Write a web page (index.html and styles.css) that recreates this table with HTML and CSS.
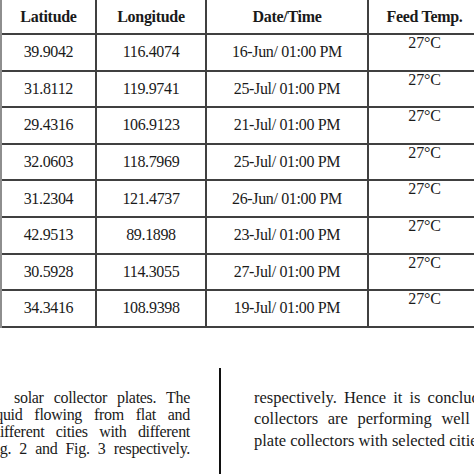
FILE: index.html
```html
<!DOCTYPE html>
<html>
<head>
<meta charset="utf-8">
<link rel="stylesheet" href="styles.css">
</head>
<body>
<div class="table">
  <div class="cell head">Latitude</div>
  <div class="cell head">Longitude</div>
  <div class="cell head">Date/Time</div>
  <div class="cell head">Feed Temp.</div>

  <div class="cell">39.9042</div><div class="cell">116.4074</div><div class="cell">16-Jun/ 01:00 PM</div><div class="cell temp">27°C</div>
  <div class="cell">31.8112</div><div class="cell">119.9741</div><div class="cell">25-Jul/ 01:00 PM</div><div class="cell temp">27°C</div>
  <div class="cell">29.4316</div><div class="cell">106.9123</div><div class="cell">21-Jul/ 01:00 PM</div><div class="cell temp">27°C</div>
  <div class="cell">32.0603</div><div class="cell">118.7969</div><div class="cell">25-Jul/ 01:00 PM</div><div class="cell temp">27°C</div>
  <div class="cell">31.2304</div><div class="cell">121.4737</div><div class="cell">26-Jun/ 01:00 PM</div><div class="cell temp">27°C</div>
  <div class="cell">42.9513</div><div class="cell">89.1898</div><div class="cell">23-Jul/ 01:00 PM</div><div class="cell temp">27°C</div>
  <div class="cell">30.5928</div><div class="cell">114.3055</div><div class="cell">27-Jul/ 01:00 PM</div><div class="cell temp">27°C</div>
  <div class="cell">34.3416</div><div class="cell">108.9398</div><div class="cell">19-Jul/ 01:00 PM</div><div class="cell temp">27°C</div>
</div>

<div class="text-section">
  <div class="col-left">
    <div class="jline l1">solar collector plates. The</div>
    <div class="jline l2">quid flowing from flat and</div>
    <div class="jline l3">different cities with different</div>
    <div class="jline l4">Fig. 2 and Fig. 3 respectively.</div>
  </div>
  <div class="rule"></div>
  <div class="col-right">
    <div class="rline r1">respectively. Hence it is concluded that</div>
    <div class="rline r2">collectors are performing well with</div>
    <div class="rline r3">plate collectors with selected cities</div>
  </div>
</div>
</body>
</html>
```

FILE: styles.css
```css
html, body {
  margin: 0;
  padding: 0;
  background: #ffffff;
  overflow: hidden;
  width: 474px;
  height: 474px;
}

body {
  font-family: "Liberation Serif", "Times New Roman", serif;
  color: #1a1a1a;
}

.table {
  display: grid;
  width: 478px;
  grid-template-columns: 93px 108px 160px 111px;
  grid-template-rows: 33px repeat(8, 34.6px);
  column-gap: 2px;
  row-gap: 2px;
  background: #404040;
  border-left: 2px solid #8e8e8e;
  padding-bottom: 2px;
}

.cell {
  background: #ffffff;
  display: flex;
  align-items: center;
  justify-content: center;
  font-size: 16px;
  letter-spacing: -0.35px;
  white-space: nowrap;
}

.head {
  font-weight: bold;
  letter-spacing: -0.3px;
  padding-top: 1px;
}

.temp {
  align-items: flex-start;
  line-height: 15px;
  letter-spacing: -0.2px;
}

.text-section {
  display: flex;
  align-items: flex-start;
  margin-top: 40px;
  height: 106px;
}

.col-left {
  width: 190px;
  flex: none;
  padding-top: 21.5px;
  font-size: 16px;
  letter-spacing: -0.3px;
  line-height: 17px;
}

.jline {
  text-align: justify;
  text-align-last: justify;
}

.l1 { margin-left: 14px; }
.l2 { margin-left: -4.8px; }
.l3 { margin-left: -7.8px; }
.l4 { margin-left: -13px; }

.rule {
  flex: none;
  width: 2px;
  height: 106px;
  margin-left: 29px;
  background: #111111;
}

.col-right {
  flex: none;
  margin-left: 33px;
  padding-top: 19px;
  font-size: 16.5px;
  line-height: 21.5px;
  white-space: nowrap;
}

.r1 { word-spacing: 3px; }
.r2 { word-spacing: 5.5px; }
```
